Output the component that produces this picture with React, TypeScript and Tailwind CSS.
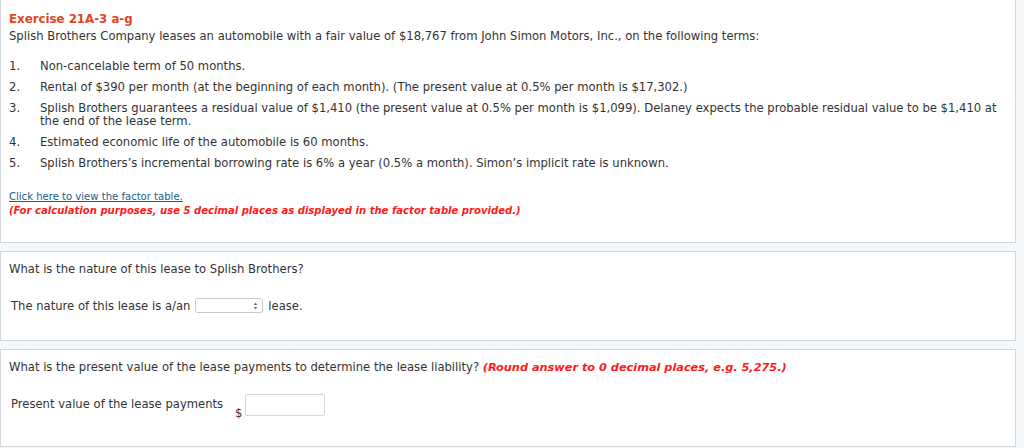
import React from 'react';

const font = { fontFamily: '"DejaVu Sans", Verdana, sans-serif' };
const narrow = { fontFamily: '"DejaVu Sans Condensed", Tahoma, sans-serif' };

const terms = [
  'Non-cancelable term of 50 months.',
  'Rental of $390 per month (at the beginning of each month). (The present value at 0.5% per month is $17,302.)',
  'Splish Brothers guarantees a residual value of $1,410 (the present value at 0.5% per month is $1,099). Delaney expects the probable residual value to be $1,410 at the end of the lease term.',
  'Estimated economic life of the automobile is 60 months.',
  'Splish Brothers’s incremental borrowing rate is 6% a year (0.5% a month). Simon’s implicit rate is unknown.',
];

export default function App() {
  return (
    <div className="w-[1024px] h-[448px] overflow-hidden bg-[#f4f7fa] text-[11.6px] text-[#333]" style={font}>
      <div className="w-[1016px] flex flex-col gap-[8px]">
        <div className="h-[243px] bg-white border border-t-0 border-[#d3d8dd] px-[8px] pt-[11px]">
          <h1 className="text-[11.8px] font-bold text-[#e2461f] leading-[16px]">Exercise 21A-3 a-g</h1>
          <p className="mt-[1px] leading-[16px]">
            Splish Brothers Company leases an automobile with a fair value of $18,767 from John Simon Motors, Inc., on the following terms:
          </p>
          <ol className="mt-[16px] flex flex-col gap-[8px]">
            {terms.map((t, i) => (
              <li key={i} className="flex leading-[13px]">
                <span className="w-[31px] shrink-0">{i + 1}.</span>
                <span>{t}</span>
              </li>
            ))}
          </ol>
          <div className="mt-[20px] leading-[14px] text-[11.2px]" style={narrow}>
            <a className="text-[#245a8d] underline">Click here to view the factor table.</a>
            <p className="text-[#ff1a1a] font-bold italic">
              (For calculation purposes, use 5 decimal places as displayed in the factor table provided.)
            </p>
          </div>
        </div>

        <div className="h-[90px] bg-white border border-[#d3d8dd] px-[8px] pt-[10px]">
          <p className="leading-[14px]">What is the nature of this lease to Splish Brothers?</p>
          <div className="mt-[22px] flex items-center pl-[2px] leading-[14px]">
            <span>The nature of this lease is a/an</span>
            <span className="ml-[5px] w-[68px] h-[15px] border border-[#c8c8c8] rounded-[3px] flex items-center justify-end pr-[4px]">
              <svg width="5" height="8" viewBox="0 0 5 8">
                <path d="M0.5 3 L2.5 0.5 L4.5 3 Z" fill="#777" />
                <path d="M0.5 5 L2.5 7.5 L4.5 5 Z" fill="#777" />
              </svg>
            </span>
            <span className="ml-[5px]">lease.</span>
          </div>
        </div>

        <div className="h-[98px] bg-white border border-[#d3d8dd] px-[8px] pt-[10px]">
          <p className="leading-[14px]">
            What is the present value of the lease payments to determine the lease liability?{' '}
            <span className="text-[#ff1a1a] font-bold italic text-[11.3px]">(Round answer to 0 decimal places, e.g. 5,275.)</span>
          </p>
          <div className="mt-[22px] flex items-start pl-[2px] leading-[14px]">
            <span className="w-[224px]">Present value of the lease payments</span>
            <span className="mt-[9px] w-[10px]">$</span>
            <span className="w-[80px] h-[22px] border border-[#d6d6d6] rounded-[2px] -mt-[3px]" />
          </div>
        </div>
      </div>
    </div>
  );
}
